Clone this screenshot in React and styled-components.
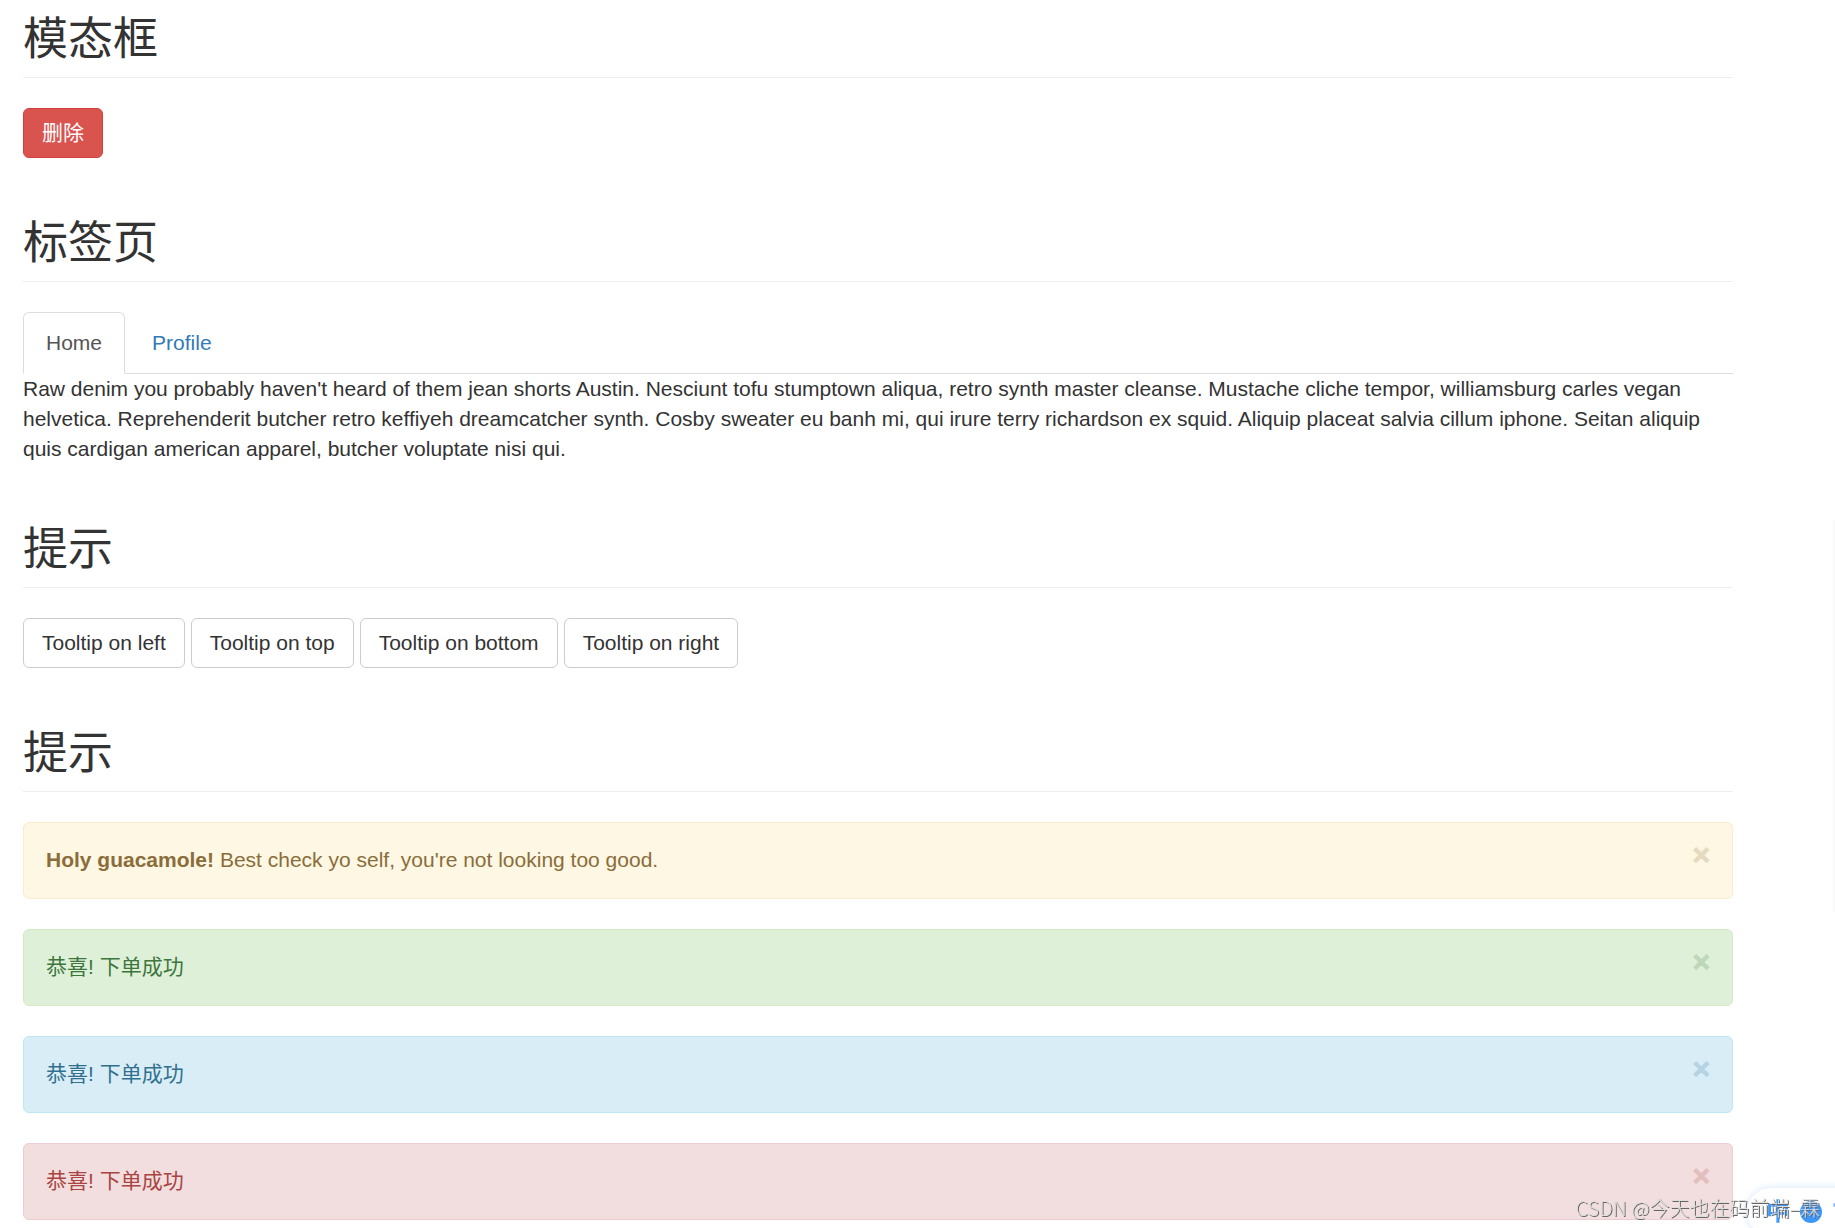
import styled, {createGlobalStyle, css} from "styled-components";
import {useState} from "react";

const GlobalStyle = createGlobalStyle`
  * {
    box-sizing: border-box;
  }

  body {
    margin: 0;
    background: #fff;
    color: #333;
    font-family: "Liberation Sans", "Noto Sans CJK SC", sans-serif;
    font-size: 21px;
    line-height: 30px;
    overflow-x: hidden;
  }
`;

const Page = styled.main`
  margin-right: 102px;
  padding: 14px 0 8px 23px;
`;

const Section = styled.section`
  & + & {
    margin-top: 60px;
  }
`;

const PageHeader = styled.h1`
  margin: 0 0 30px;
  padding-bottom: 11px;
  border-bottom: 1px solid #eee;
  font-size: 45px;
  font-weight: 400;
  line-height: 52px;
`;

const ButtonRow = styled.div`
  display: flex;
  flex-wrap: wrap;
  gap: 6px;
`;

const buttonKinds = {
    default: css`
    color: #333;
    background: #fff;
    border-color: #ccc;
  `,
    danger: css`
    color: #fff;
    background: #d9534f;
    border-color: #d43f3a;
  `,
};

const Button = styled.button`
  padding: 9px 18px;
  border: 1px solid;
  border-radius: 6px;
  font: inherit;
  cursor: pointer;
  ${({$kind}) => buttonKinds[$kind || "default"]}
`;

const TabList = styled.div`
  display: flex;
  gap: 4px;
  border-bottom: 1px solid #ddd;
`;

const Tab = styled.a`
  margin-bottom: -1px;
  padding: 15px 22px;
  border: 1px solid transparent;
  border-radius: 6px 6px 0 0;
  color: #337ab7;
  text-decoration: none;

  ${({$active}) => $active && css`
    color: #555;
    background: #fff;
    border-color: #ddd #ddd #fff;
  `}
`;

const TabPanel = styled.div`
  min-height: 90px;
`;

const AlertList = styled.div`
  display: grid;
  gap: 30px;
`;

const alertKinds = {
    warning: css`
    color: #8a6d3b;
    background: #fdf7e3;
    border-color: #faebcc;
  `,
    success: css`
    color: #3c763d;
    background: #dff0d8;
    border-color: #d6e9c6;
  `,
    info: css`
    color: #31708f;
    background: #d9edf7;
    border-color: #bce8f1;
  `,
    danger: css`
    color: #a94442;
    background: #f2dede;
    border-color: #ebccd1;
  `,
};

const AlertBox = styled.div`
  display: flex;
  align-items: flex-start;
  justify-content: space-between;
  min-height: 77px;
  padding: 22px;
  border: 1px solid;
  border-radius: 6px;
  ${({$kind}) => alertKinds[$kind]}
`;

const Close = styled.button`
  padding: 0;
  border: 0;
  background: none;
  color: inherit;
  font: inherit;
  font-size: 30px;
  font-weight: 700;
  line-height: 20px;
  opacity: 0.2;
  text-shadow: 0 1px 0 #fff;
  -webkit-text-stroke: 1px currentColor;
  cursor: pointer;
`;

// edge of the side dock that is slid out of the window
const DockEdge = styled.div`
  position: fixed;
  top: 520px;
  right: 0;
  width: 2px;
  height: 392px;
  background: #fafafa;
`;

const InputBadge = styled.div`
  position: fixed;
  right: -30px;
  bottom: -8px;
  display: flex;
  align-items: center;
  gap: 10px;
  width: 118px;
  height: 48px;
  padding-left: 19px;
  border-radius: 24px;
  background: #fff;
  box-shadow: 0 0 8px #d5e6fb;
  color: #3e97fb;
  font-size: 24px;
  font-weight: 700;
`;

const Watermark = styled.div`
  position: fixed;
  right: 15px;
  bottom: 5px;
  color: #ddd;
  font-family: "Noto Sans CJK SC", sans-serif;
  font-size: 20px;
  font-weight: 300;
  text-shadow: 1px 1px 0 #666;
  white-space: nowrap;
`;

const tabs = [
    {
        id: "home",
        label: "Home",
        text: "Raw denim you probably haven't heard of them jean shorts Austin. Nesciunt tofu stumptown aliqua, retro synth master cleanse. Mustache cliche tempor, williamsburg carles vegan helvetica. Reprehenderit butcher retro keffiyeh dreamcatcher synth. Cosby sweater eu banh mi, qui irure terry richardson ex squid. Aliquip placeat salvia cillum iphone. Seitan aliquip quis cardigan american apparel, butcher voluptate nisi qui.",
    },
    {id: "profile", label: "Profile", text: ""},
];

const tooltips = ["left", "top", "bottom", "right"];

const initialAlerts = [
    {kind: "warning", title: "Holy guacamole!", text: "Best check yo self, you're not looking too good."},
    {kind: "success", text: "恭喜! 下单成功"},
    {kind: "info", text: "恭喜! 下单成功"},
    {kind: "danger", text: "恭喜! 下单成功"},
];

function Tabs() {
    const [active, setActive] = useState("home")
    const current = tabs.find((tab) => tab.id === active)

    function handleClick(e, id) {
        e.preventDefault()
        setActive(id)
    }

    return (
        <>
            <TabList role="tablist">
                {tabs.map(({id, label}) => (
                    <Tab
                        key={id}
                        href={`#${id}`}
                        role="tab"
                        aria-selected={id === active}
                        $active={id === active}
                        onClick={(e) => handleClick(e, id)}
                    >
                        {label}
                    </Tab>
                ))}
            </TabList>
            <TabPanel role="tabpanel">{current.text}</TabPanel>
        </>
    );
}

function Alert({kind, title, text, onClose}) {
    return (
        <AlertBox role="alert" $kind={kind}>
            <div>
                {title && <><strong>{title}</strong>{" "}</>}
                {text}
            </div>
            <Close type="button" onClick={onClose}>×</Close>
        </AlertBox>
    );
}

function App() {
    const [alerts, setAlerts] = useState(initialAlerts)

    return (
        <>
            <GlobalStyle/>
            <Page>
                <Section>
                    <PageHeader>模态框</PageHeader>
                    <ButtonRow>
                        <Button type="button" $kind="danger">删除</Button>
                    </ButtonRow>
                </Section>
                <Section>
                    <PageHeader>标签页</PageHeader>
                    <Tabs/>
                </Section>
                <Section>
                    <PageHeader>提示</PageHeader>
                    <ButtonRow>
                        {tooltips.map((side) => (
                            <Button key={side} type="button">{`Tooltip on ${side}`}</Button>
                        ))}
                    </ButtonRow>
                </Section>
                <Section>
                    <PageHeader>提示</PageHeader>
                    <AlertList>
                        {alerts.map((alert) => (
                            <Alert
                                key={alert.kind}
                                {...alert}
                                onClose={() => setAlerts((list) => list.filter((item) => item !== alert))}
                            />
                        ))}
                    </AlertList>
                </Section>
            </Page>
            <DockEdge/>
            <InputBadge>
                <span>中</span>
                <svg width="40" height="24" viewBox="0 0 40 24" aria-hidden="true">
                    <circle cx="11" cy="12" r="11" fill="#3e97fb"/>
                    <circle cx="35" cy="5" r="2" fill="#8cc0fc"/>
                </svg>
            </InputBadge>
            <Watermark>CSDN @今天也在码前端–霖</Watermark>
        </>
    );
}

export default App;
